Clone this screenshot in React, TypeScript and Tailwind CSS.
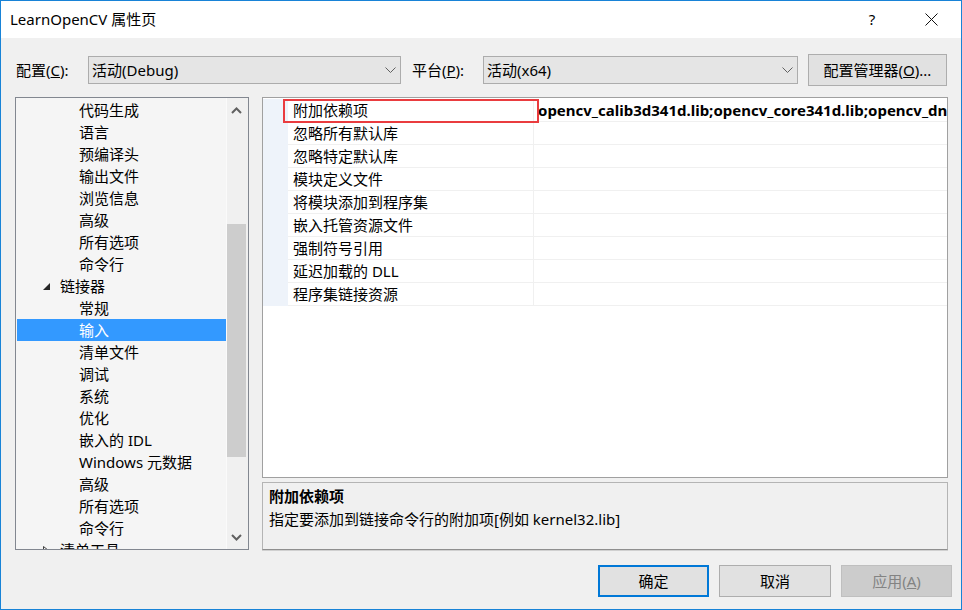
import React from 'react'

type TreeRow = { label: string; level: 'child' | 'parent'; open?: boolean; selected?: boolean }

const treeRows: TreeRow[] = [
  { label: '代码生成', level: 'child' },
  { label: '语言', level: 'child' },
  { label: '预编译头', level: 'child' },
  { label: '输出文件', level: 'child' },
  { label: '浏览信息', level: 'child' },
  { label: '高级', level: 'child' },
  { label: '所有选项', level: 'child' },
  { label: '命令行', level: 'child' },
  { label: '链接器', level: 'parent', open: true },
  { label: '常规', level: 'child' },
  { label: '输入', level: 'child', selected: true },
  { label: '清单文件', level: 'child' },
  { label: '调试', level: 'child' },
  { label: '系统', level: 'child' },
  { label: '优化', level: 'child' },
  { label: '嵌入的 IDL', level: 'child' },
  { label: 'Windows 元数据', level: 'child' },
  { label: '高级', level: 'child' },
  { label: '所有选项', level: 'child' },
  { label: '命令行', level: 'child' },
  { label: '清单工具', level: 'parent', open: false },
]

const props = [
  { name: '附加依赖项', value: 'opencv_calib3d341d.lib;opencv_core341d.lib;opencv_dnn341d.lib;opencv_features2d341d.lib' },
  { name: '忽略所有默认库', value: '' },
  { name: '忽略特定默认库', value: '' },
  { name: '模块定义文件', value: '' },
  { name: '将模块添加到程序集', value: '' },
  { name: '嵌入托管资源文件', value: '' },
  { name: '强制符号引用', value: '' },
  { name: '延迟加载的 DLL', value: '' },
  { name: '程序集链接资源', value: '' },
]

function Chevron({ up = false }: { up?: boolean }) {
  return (
    <svg width="11" height="6" viewBox="0 0 11 6" className={up ? 'rotate-180' : ''}>
      <path d="M0.5 0.5 L5.5 5.5 L10.5 0.5" fill="none" stroke="#606060" strokeWidth="1" />
    </svg>
  )
}

function ScrollArrow({ up = false }: { up?: boolean }) {
  return (
    <svg width="11" height="7" viewBox="0 0 11 7" className={up ? 'rotate-180' : ''}>
      <path d="M1 1 L5.5 5.5 L10 1" fill="none" stroke="#606060" strokeWidth="2" />
    </svg>
  )
}

function Combo({ text, width }: { text: string; width: string }) {
  return (
    <div className={`${width} h-[28px] flex items-center justify-between bg-[#e5e5e5] border border-[#acacac] pl-[3px] pr-[4px]`}>
      <span>{text}</span>
      <Chevron />
    </div>
  )
}

function Tree() {
  return (
    <div className="w-[234px] h-[453px] border border-[#828790] bg-[#f5f5f5] flex overflow-hidden">
      <div className="flex-1 pt-[1px] pl-[1px] overflow-hidden">
        {treeRows.map((row, i) => (
          <div
            key={i}
            className={`h-[22px] shrink-0 flex items-center ${row.selected ? 'bg-[#3399ff] text-white' : ''}`}
          >
            {row.level === 'child' ? (
              <span className="pl-[62px]">{row.label}</span>
            ) : (
              <>
                <span className="w-[43px] pl-[26px] flex items-center">
                  {row.open ? (
                    <svg width="8" height="7" viewBox="0 0 8 7">
                      <polygon points="7,0 7,7 0,7" fill="#262626" />
                    </svg>
                  ) : (
                    <svg width="6" height="9" viewBox="0 0 6 9">
                      <polygon points="0.5,0.5 5.5,4.5 0.5,8.5" fill="none" stroke="#404040" />
                    </svg>
                  )}
                </span>
                <span>{row.label}</span>
              </>
            )}
          </div>
        ))}
      </div>
      {/* vertical scrollbar */}
      <div className="w-[22px] bg-[#f0f0f0] border-l border-[#fafafa] flex flex-col">
        <div className="h-[24px] flex items-center justify-center pr-[2px]">
          <ScrollArrow up />
        </div>
        <div className="h-[102px]" />
        <div className="h-[233px] w-[19px] bg-[#cdcdcd]" />
        <div className="flex-1" />
        <div className="h-[24px] flex items-center justify-center pr-[2px]">
          <ScrollArrow />
        </div>
      </div>
    </div>
  )
}

function PropertyGrid() {
  return (
    <div className="relative h-[381px] border border-[#a0a0a0] bg-white overflow-hidden">
      <div className="pt-[1px]">
        {props.map((p, i) => (
          <div key={i} className="h-[23px] flex">
            <div className="w-[25px] bg-[#eef3fa]" />
            <div className="w-[246px] flex items-center pl-[5px] border-b border-r border-[#f0f0f0]">
              {p.name}
            </div>
            <div className="flex-1 flex items-center pl-[4px] border-b border-[#f0f0f0] whitespace-nowrap overflow-hidden font-bold">
              {p.value}
            </div>
          </div>
        ))}
      </div>
      {/* highlight around the selected property */}
      <div className="absolute left-[20px] top-[1px] w-[256px] h-[24px] border-2 border-[#ea3c3f]" />
    </div>
  )
}

function Button({ label, primary = false, disabled = false }: { label: React.ReactNode; primary?: boolean; disabled?: boolean }) {
  return (
    <div
      className={`h-[32px] flex items-center justify-center ${
        primary
          ? 'w-[111px] border-2 border-[#0078d7] bg-[#e1e1e1]'
          : disabled
          ? 'w-[111px] border border-[#bfbfbf] bg-[#cccccc] text-[#838383]'
          : 'w-[112px] border border-[#adadad] bg-[#e1e1e1]'
      }`}
    >
      {label}
    </div>
  )
}

export default function App() {
  return (
    <div className="w-[962px] h-[610px] border border-[#1883d7] bg-[#f0f0f0] flex flex-col text-[15px] text-black font-['Noto_Sans','Noto_Sans_CJK_SC',sans-serif] overflow-hidden">
      {/* title bar */}
      <div className="h-[37px] shrink-0 bg-white flex items-center pl-[9px]">
        <span className="flex-1">LearnOpenCV 属性页</span>
        <span className="w-[20px] text-center mr-[43px]">?</span>
        <svg width="13" height="13" viewBox="0 0 13 13" className="mr-[23px]">
          <path d="M0.5 0.5 L12.5 12.5 M12.5 0.5 L0.5 12.5" stroke="#111" strokeWidth="1" />
        </svg>
      </div>

      {/* configuration / platform selectors */}
      <div className="h-[32px] mt-[16px] shrink-0 flex items-center pl-[15px]">
        <span className="w-[72px]">
          配置(<span className="underline">C</span>):
        </span>
        <Combo text="活动(Debug)" width="w-[313px]" />
        <span className="w-[82px] pl-[11px]">
          平台(<span className="underline">P</span>):
        </span>
        <Combo text="活动(x64)" width="w-[315px]" />
        <div className="ml-[10px] w-[139px] h-[32px] flex items-center justify-center bg-[#e1e1e1] border border-[#adadad]">
          配置管理器(<span className="underline">O</span>)...
        </div>
      </div>

      {/* main panels */}
      <div className="mt-[11px] flex pl-[14px] gap-[13px]">
        <Tree />
        <div className="w-[686px] flex flex-col gap-[4px]">
          <PropertyGrid />
          <div className="h-[68px] border border-[#b4b4b4] border-b-[#8f8f8f] bg-[#f0f0f0] pl-[6px] pt-[2px] shadow-[0_1px_0_#d0d0d0]">
            <div className="font-bold leading-[22px]">附加依赖项</div>
            <div className="leading-[24px]">指定要添加到链接命令行的附加项[例如 kernel32.lib]</div>
          </div>
        </div>
      </div>

      {/* dialog buttons */}
      <div className="mt-[15px] flex pl-[597px] gap-[10px]">
        <Button label="确定" primary />
        <Button label="取消" />
        <Button
          label={
            <span>
              应用(<span className="underline">A</span>)
            </span>
          }
          disabled
        />
      </div>
    </div>
  )
}
